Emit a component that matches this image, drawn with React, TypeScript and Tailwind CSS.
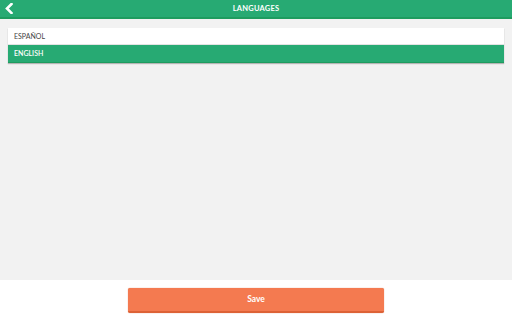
import React from "react";

export default function App() {
  return (
    <div className="w-[512px] h-[320px] flex flex-col bg-[#f2f2f2] overflow-hidden" style={{ fontFamily: "Lato, 'Open Sans', sans-serif" }}>
      <div className="h-[19px] shrink-0 bg-[#27aa73] border-b-[2px] border-[#1e9c5f] relative flex items-center justify-center">
        <svg className="absolute left-[5px] top-[3px]" width="8" height="11" viewBox="0 0 8 11">
          <path d="M6.5 1 L2 5.5 L6.5 10" fill="none" stroke="white" strokeWidth="2.6" strokeLinecap="square" />
        </svg>
        <span className="text-white text-[7.5px] font-bold tracking-[0.2px]">LANGUAGES</span>
      </div>
      <div className="flex-1 px-[8px] pt-[9px]">
        <div className="flex flex-col shadow-[0_1px_1px_rgba(0,0,0,0.25)]">
          <div className="h-[17px] bg-white flex items-center px-[6px] text-[7px] text-[#444] border-b border-[#e3e3e3]">ESPAÑOL</div>
          <div className="h-[18px] bg-[#27aa73] flex items-center px-[6px] text-[7px] font-semibold text-white border-b border-[#1e9c5f]">ENGLISH</div>
        </div>
      </div>
      <div className="h-[40px] shrink-0 bg-white flex items-start justify-center pt-[8px]">
        <div className="w-[256px] h-[25px] bg-[#f47a50] border-b-[2px] border-[#dd6236] rounded-[2px] shadow-[0_0_1px_rgba(200,80,40,0.8)] flex items-center justify-center text-white text-[8.5px] font-bold">Save</div>
      </div>
    </div>
  );
}
